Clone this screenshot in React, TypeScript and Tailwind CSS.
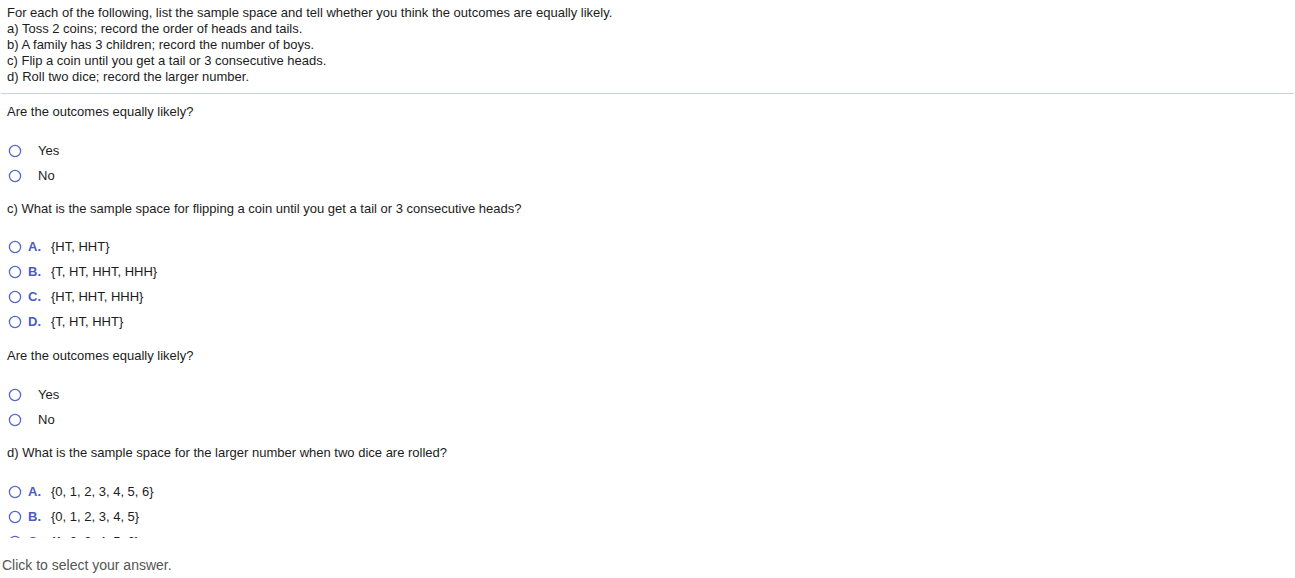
const font = { fontFamily: '"Liberation Sans", Arial, sans-serif' };

const Radio = () => (
  <svg width="14" height="14" viewBox="0 0 14 14" className="shrink-0">
    <circle cx="7" cy="7" r="5.6" fill="white" stroke="#5566cf" strokeWidth="1.3" />
  </svg>
);

const YesNo = () => (
  <div className="mt-[18px] flex flex-col">
    {['Yes', 'No'].map((t) => (
      <div key={t} className="flex h-[25px] items-center">
        <div className="ml-[8px] flex w-[30px]">
          <Radio />
        </div>
        <span>{t}</span>
      </div>
    ))}
  </div>
);

const Choices = ({ items, top }: { items: [string, string][]; top: string }) => (
  <div className={`flex flex-col ${top}`}>
    {items.map(([l, t]) => (
      <div key={l} className="flex h-[25px] items-center">
        <div className="ml-[8px] w-[20px]">
          <Radio />
        </div>
        <span className="w-[23px] font-bold text-[#4a5bc6]">{l}</span>
        <span>{t}</span>
      </div>
    ))}
  </div>
);

export default function App() {
  return (
    <div className="flex h-[578px] w-[1295px] flex-col bg-white text-[13px] leading-4 text-[#1c1c1c]" style={font}>
      <div className="h-[538px] overflow-hidden">
        <div className="px-[7px] pt-[5px]">
          <p>For each of the following, list the sample space and tell whether you think the outcomes are equally likely.</p>
          <p>a) Toss 2 coins; record the order of heads and tails.</p>
          <p>b) A family has 3 children; record the number of boys.</p>
          <p>c) Flip a coin until you get a tail or 3 consecutive heads.</p>
          <p>d) Roll two dice; record the larger number.</p>
        </div>
        <div className="mt-2 ml-px h-px w-[1293px] bg-[#c8d1e1]" />
        <div className="flex flex-col">
          <p className="mt-[10px] pl-[7px]">Are the outcomes equally likely?</p>
          <YesNo />
          <p className="mt-[13px] pl-[7px]">c) What is the sample space for flipping a coin until you get a tail or 3 consecutive heads?</p>
          <Choices
            top="mt-[17px]"
            items={[
              ['A.', '{HT, HHT}'],
              ['B.', '{T, HT, HHT, HHH}'],
              ['C.', '{HT, HHT, HHH}'],
              ['D.', '{T, HT, HHT}'],
            ]}
          />
          <p className="mt-[14px] pl-[7px]">Are the outcomes equally likely?</p>
          <YesNo />
          <p className="mt-[13px] pl-[7px]">d) What is the sample space for the larger number when two dice are rolled?</p>
          <Choices
            top="mt-[18px]"
            items={[
              ['A.', '{0, 1, 2, 3, 4, 5, 6}'],
              ['B.', '{0, 1, 2, 3, 4, 5}'],
              ['C.', '{1, 2, 3, 4, 5, 6}'],
              ['D.', '{1, 2, 3, 4, 5}'],
            ]}
          />
        </div>
      </div>
      <div className="pl-[2px] pt-[19px] text-[14px] text-[#555]">Click to select your answer.</div>
    </div>
  );
}
